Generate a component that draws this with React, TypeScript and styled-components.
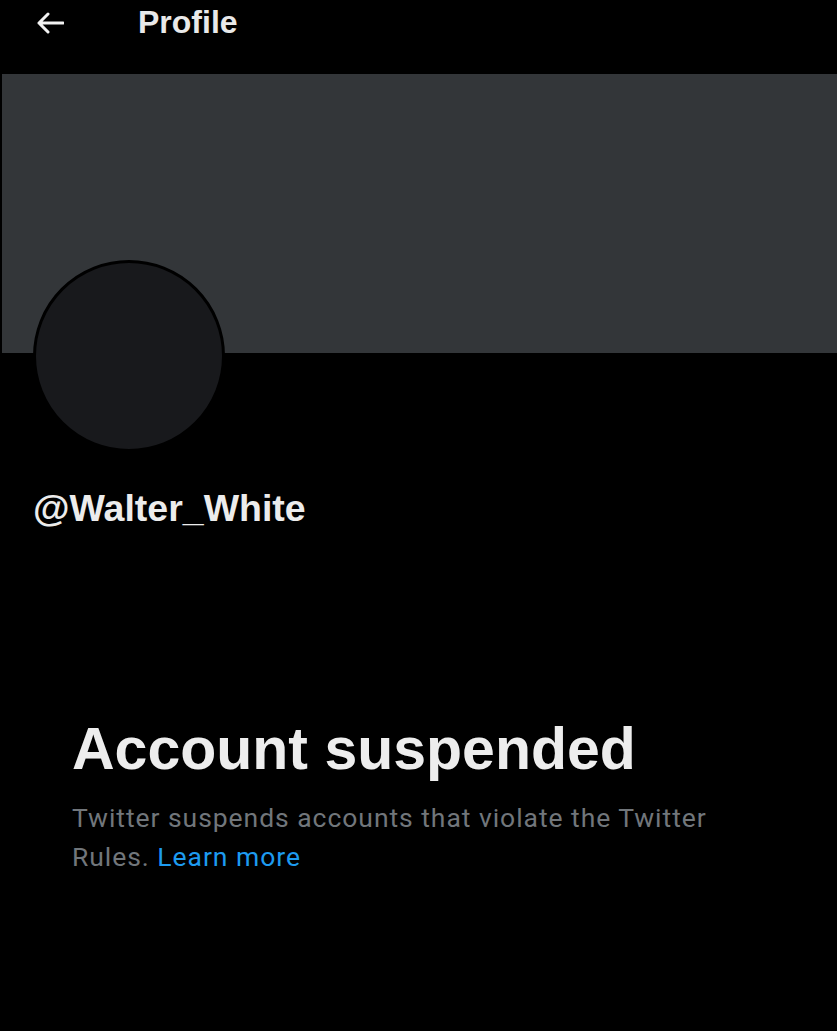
import React from "react";
import styled, { createGlobalStyle } from "styled-components";

const Global = createGlobalStyle`
  html, body { margin: 0; padding: 0; background: #000; }
  body { font-family: Roboto, "Liberation Sans", sans-serif; color: #e7e9ea; }
`;

const Page = styled.div`
  width: 837px;
  height: 1031px;
  background: #000;
  display: flex;
  flex-direction: column;
  overflow: hidden;
`;

const TopBar = styled.header`
  height: 74px;
  display: flex;
  align-items: flex-start;
  padding-left: 36px;
  box-sizing: border-box;
`;

const BackButton = styled.button`
  background: none;
  border: none;
  padding: 0;
  margin-top: 11px;
  width: 28px;
  height: 24px;
  display: flex;
  color: #f2f2f2;
  cursor: pointer;
`;

const Title = styled.h1`
  margin: 2px 0 0 74px;
  font-family: "Liberation Sans", Arial, sans-serif;
  font-weight: 700;
  font-size: 32px;
  line-height: 40px;
  color: #e9e9e9;
`;

const Banner = styled.div`
  height: 279px;
  margin-left: 2px;
  background: #333639;
`;

const ProfileArea = styled.section`
  display: flex;
  flex-direction: column;
  padding-left: 33px;
`;

const Avatar = styled.div`
  width: 192px;
  height: 192px;
  margin-top: -93px;
  box-sizing: border-box;
  border-radius: 50%;
  border: 3px solid #000;
  background: #18191c;
`;

const Handle = styled.div`
  margin-top: 35px;
  font-family: "Liberation Sans", Arial, sans-serif;
  font-weight: 700;
  font-size: 37.5px;
  line-height: 42px;
  color: #ececec;
`;

const Notice = styled.section`
  margin-top: 184px;
  padding-left: 72px;
  padding-right: 80px;
`;

const Heading = styled.h2`
  margin: 0;
  font-family: "Liberation Sans", Arial, sans-serif;
  font-weight: 700;
  font-size: 59px;
  line-height: 72px;
  color: #ededed;
`;

const Body = styled.p`
  margin: 13px 0 0;
  font-family: Roboto, "Liberation Sans", sans-serif;
  font-weight: 400;
  font-size: 26.5px;
  line-height: 39px;
  letter-spacing: 0.95px;
  color: #71767b;
  max-width: 670px;
`;

const Link = styled.a`
  color: #1d9bf0;
  text-decoration: none;
`;

export default function App() {
  return (
    <Page>
      <Global />
      <TopBar>
        <BackButton aria-label="Back">
          <svg width="28" height="24" viewBox="0 0 28 24" fill="none">
            <path d="M27 12H3M12 3L3 12L12 21" stroke="currentColor" strokeWidth="3" strokeLinecap="round" strokeLinejoin="round" />
          </svg>
        </BackButton>
        <Title>Profile</Title>
      </TopBar>
      <Banner />
      <ProfileArea>
        <Avatar />
        <Handle>@Walter_White</Handle>
      </ProfileArea>
      <Notice>
        <Heading>Account suspended</Heading>
        <Body>
          Twitter suspends accounts that violate the Twitter Rules. <Link href="#">Learn more</Link>
        </Body>
      </Notice>
    </Page>
  );
}
